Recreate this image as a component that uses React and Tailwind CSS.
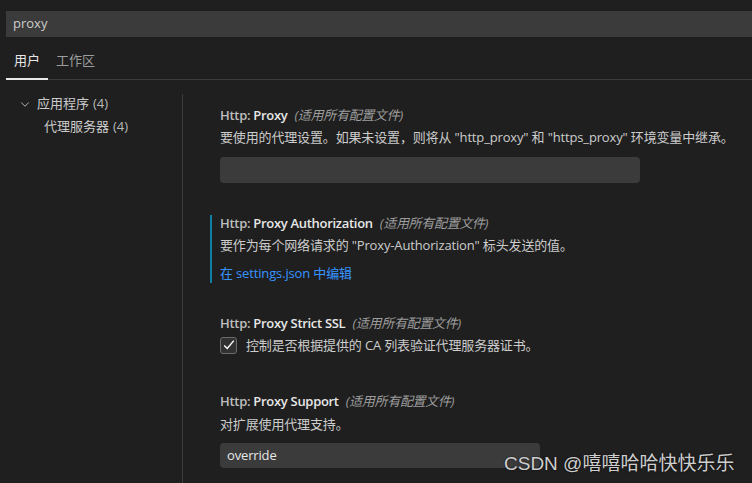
import React from 'react';

const font = { fontFamily: '"Open Sans", "Noto Sans CJK SC", sans-serif' };

const Title = ({ name }) => (
  <div className="h-4 leading-4 text-[13px] whitespace-nowrap tracking-[-0.3px]">
    <span className="font-semibold text-[#bdbdbd]">Http: </span>
    <span className="font-semibold text-[#e7e7e7]">{name}</span>
    <span className="italic text-[#9d9d9d] ml-[7px]">(适用所有配置文件)</span>
  </div>
);

const Setting = ({ focused, className = '', children }) => (
  <div
    className={`ml-[27px] border-l-2 pl-2 ${focused ? 'border-[#0e7fa3]' : 'border-transparent'} ${className}`}
  >
    {children}
  </div>
);

export default function App() {
  return (
    <div className="relative w-[752px] h-[483px] overflow-hidden bg-[#1f1f1f] text-[#cccccc]" style={font}>
      {/* search */}
      <div className="mt-[11px] ml-[6px] h-[26px] bg-[#3b3b3b] flex items-center pl-[7px] text-[13px] text-[#cccccc]">
        proxy
      </div>

      {/* tabs */}
      <div className="h-[43px] flex items-end border-b border-[#3c3c3c] ml-[6px]">
        <div className="w-[42px] h-full flex items-center justify-center border-b-2 border-[#e7e7e7] -mb-px text-[13px] text-[#e7e7e7]">
          <span className="mt-[6px]">用户</span>
        </div>
        <div className="h-full flex items-center pl-[8px] text-[13px] text-[#9d9d9d]">
          <span className="mt-[6px]">工作区</span>
        </div>
      </div>

      <div className="flex">
        {/* tree */}
        <div className="w-[182px] pt-[13px] text-[13px]">
          <div className="h-[22px] flex items-center">
            <svg className="ml-[19px] mr-[6px]" width="12" height="12" viewBox="0 0 16 16" fill="none" stroke="#c5c5c5" strokeWidth="1.2">
              <path d="M3 6l5 5 5-5" />
            </svg>
            <span>应用程序</span>
            <span className="ml-1 text-[#b8b8b8]">(4)</span>
          </div>
          <div className="h-[23px] flex items-center pl-[44px]">
            <span>代理服务器</span>
            <span className="ml-1 text-[#b8b8b8]">(4)</span>
          </div>
        </div>
        <div className="w-px h-[400px] mt-[14px] bg-[#3c3c3c]" />

        {/* settings */}
        <div className="flex-1 pt-[27px] text-[13px] tracking-[-0.15px]">
          <Setting>
            <Title name="Proxy" />
            <div className="mt-1 h-5 leading-5 whitespace-nowrap">
              要使用的代理设置。如果未设置，则将从 "http_proxy" 和 "https_proxy" 环境变量中继承。
            </div>
            <div className="mt-[10px] w-[420px] h-[26px] bg-[#3b3b3b] rounded-sm" />
          </Setting>

          <Setting focused className="mt-[32px]">
            <Title name="Proxy Authorization" />
            <div className="mt-1 h-5 leading-5 whitespace-nowrap">
              要作为每个网络请求的 "Proxy-Authorization" 标头发送的值。
            </div>
            <div className="mt-2 h-5 leading-5 text-[#3794ff]">在 settings.json 中编辑</div>
          </Setting>

          <Setting className="mt-[32px]">
            <Title name="Proxy Strict SSL" />
            <div className="mt-[4px] flex items-center">
              <div className="w-[17px] h-[17px] rounded-[3px] border border-[#6b6b6b] bg-[#313131] flex items-center justify-center">
                <svg width="14" height="14" viewBox="0 0 16 16" fill="none" stroke="#ffffff" strokeWidth="1.6">
                  <path d="M2.5 8.5l3.5 3.5 7.5-9" />
                </svg>
              </div>
              <span className="ml-[9px] leading-5 whitespace-nowrap">控制是否根据提供的 CA 列表验证代理服务器证书。</span>
            </div>
          </Setting>

          <Setting className="mt-[38px]">
            <Title name="Proxy Support" />
            <div className="mt-[5px] h-5 leading-5">对扩展使用代理支持。</div>
            <div className="mt-[9px] w-[320px] h-[25px] bg-[#3b3b3b] rounded-sm flex items-center pl-[7px] text-[#e7e7e7]">
              override
            </div>
          </Setting>
        </div>
      </div>

      {/* watermark */}
      <div
        className="absolute left-[504px] top-[451px] text-[19px] leading-[26px] text-[#cfcfcf] whitespace-nowrap [text-shadow:0_0_2px_rgba(0,0,0,0.8)]"
        style={{ fontFamily: '"Liberation Sans", "Noto Sans CJK SC", sans-serif' }}
      >
        CSDN @嘻嘻哈哈快快乐乐
      </div>
    </div>
  );
}
